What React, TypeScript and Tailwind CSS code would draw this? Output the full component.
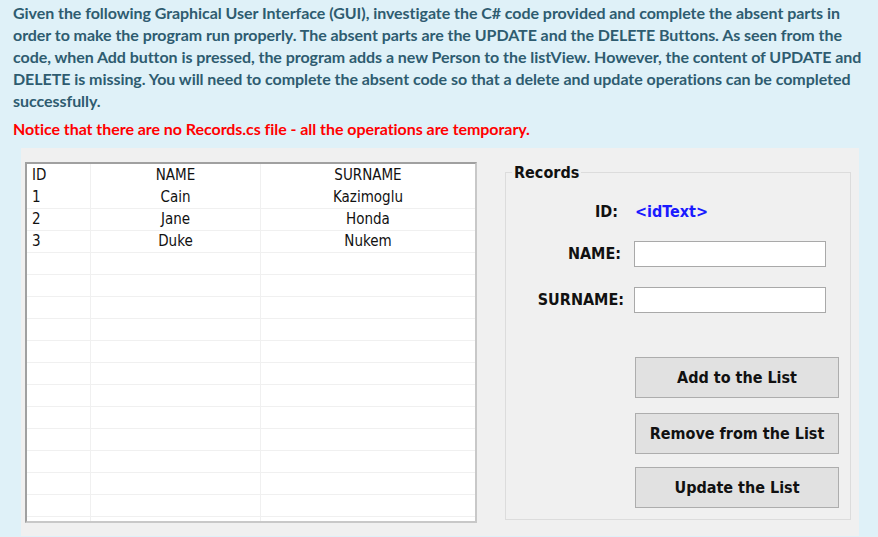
import React from 'react';

const lines = [
    'Given the following Graphical User Interface (GUI), investigate the C# code provided and complete the absent parts in',
    'order to make the program run properly. The absent parts are the UPDATE and the DELETE Buttons. As seen from the',
    'code, when Add button is pressed, the program adds a new Person to the listView. However, the content of UPDATE and',
    'DELETE is missing. You will need to complete the absent code so that a delete and update operations can be completed',
    'successfully.',
];

const people = [
    { id: '1', name: 'Cain', surname: 'Kazimoglu' },
    { id: '2', name: 'Jane', surname: 'Honda' },
    { id: '3', name: 'Duke', surname: 'Nukem' },
];

const formFont = { fontFamily: '"DejaVu Sans Condensed", "DejaVu Sans", sans-serif' };

const FormButton: React.FC<{ label: string; className?: string }> = ({ label, className = '' }) => (
    <button
        className={`w-[204px] h-[41px] bg-[#e1e1e1] border border-[#adadad] text-[16px] font-bold text-[#111] ${className}`}
    >
        {label}
    </button>
);

export default function App() {
    const emptyRows = Array.from({ length: 14 });

    return (
        <div className="w-[878px] h-[537px] bg-[#dff1f8] overflow-hidden">
            <div
                className="pl-[13px] pt-[2px] text-[16px] font-bold text-[#2e5c70] leading-[22px] tracking-[-0.05px]"
                style={{ fontFamily: 'Lato, "Open Sans", sans-serif' }}
            >
                {lines.map((l) => (
                    <div key={l} className="whitespace-nowrap">{l}</div>
                ))}
                <div className="mt-[6px] whitespace-nowrap text-[#ff0000]">
                    Notice that there are no Records.cs file - all the operations are temporary.
                </div>
            </div>

            <div className="ml-[21px] mt-[8px] w-[838px] h-[388px] bg-[#f0f0f0] flex pl-[4px] pt-[14px]" style={formFont}>
                {/* list view */}
                <div className="w-[452px] h-[361px] bg-white border-2 border-t-[#a0a0a0] border-l-[#a0a0a0] border-b-[#c8c8c8] border-r-[#c8c8c8] overflow-hidden text-[15px] text-[#111]">
                    <div className="flex h-[23px] items-center">
                        <div className="w-[64px] pl-[5px] border-r border-[#f0f0f0] h-full flex items-center">ID</div>
                        <div className="w-[170px] text-center border-r border-[#f0f0f0] h-full flex items-center justify-center">NAME</div>
                        <div className="flex-1 text-center h-full flex items-center justify-center">SURNAME</div>
                    </div>
                    {people.map((p) => (
                        <div key={p.id} className="flex h-[22px] items-center border-b border-[#f0f0f0]">
                            <div className="w-[64px] pl-[5px] border-r border-[#f0f0f0] h-full flex items-center">{p.id}</div>
                            <div className="w-[170px] border-r border-[#f0f0f0] h-full flex items-center justify-center">{p.name}</div>
                            <div className="flex-1 h-full flex items-center justify-center">{p.surname}</div>
                        </div>
                    ))}
                    {emptyRows.map((_, i) => (
                        <div key={i} className="flex h-[22px] border-b border-[#f0f0f0]">
                            <div className="w-[64px] border-r border-[#f0f0f0] h-full" />
                            <div className="w-[170px] border-r border-[#f0f0f0] h-full" />
                            <div className="flex-1 h-full" />
                        </div>
                    ))}
                </div>

                {/* records group */}
                <div className="relative ml-[28px] mt-[10px] w-[346px] h-[348px] border border-[#dcdcdc]">
                    <span className="absolute left-[6px] -top-[10px] px-[2px] bg-[#f0f0f0] text-[16px] font-bold text-[#111] leading-[20px]">
                        Records
                    </span>
                    <div className="flex flex-col text-[16px] font-bold text-[#111]">
                        <div className="flex items-center h-[26px] mt-[26px]">
                            <div className="w-[112px] text-right">ID:</div>
                            <div className="ml-[17px] text-[#1a1aff]">&lt;idText&gt;</div>
                        </div>
                        <div className="flex items-center h-[26px] mt-[16px]">
                            <div className="w-[115px] text-right">NAME:</div>
                            <input className="ml-[13px] w-[192px] h-[26px] bg-white border border-[#a9a9a9] outline-none" />
                        </div>
                        <div className="flex items-center h-[26px] mt-[20px]">
                            <div className="w-[118px] text-right">SURNAME:</div>
                            <input className="ml-[10px] w-[192px] h-[26px] bg-white border border-[#a9a9a9] outline-none" />
                        </div>
                        <div className="flex flex-col pl-[129px]">
                            <FormButton label="Add to the List" className="mt-[44px]" />
                            <FormButton label="Remove from the List" className="mt-[15px]" />
                            <FormButton label="Update the List" className="mt-[13px]" />
                        </div>
                    </div>
                </div>
            </div>
        </div>
    );
}
